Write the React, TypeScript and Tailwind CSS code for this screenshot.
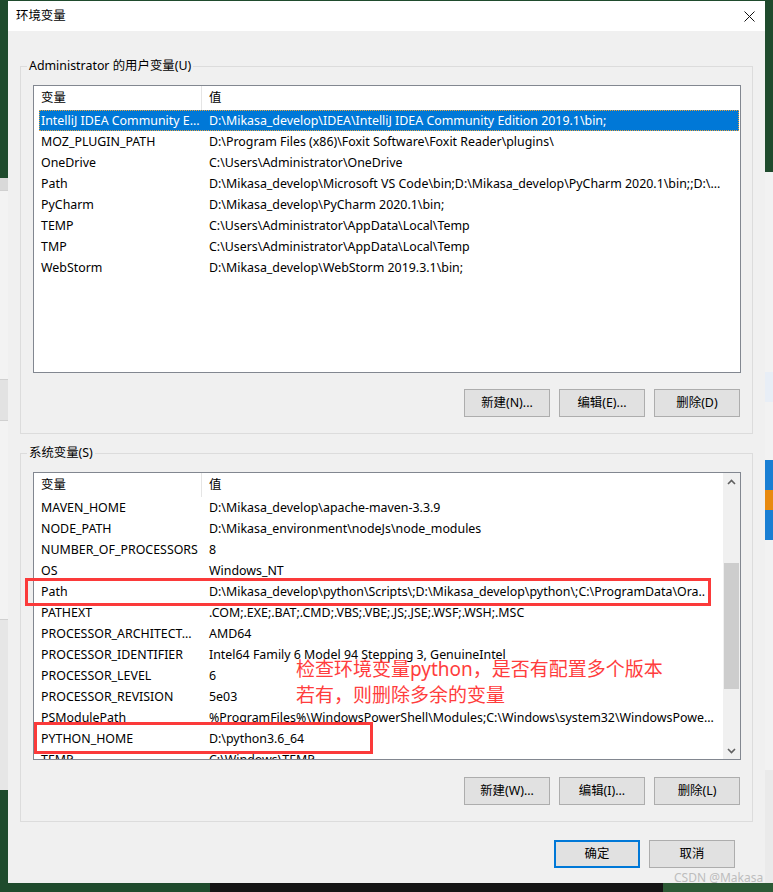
import React from "react";

const font = "font-['Noto_Sans','Noto_Sans_CJK_SC',sans-serif]";

type EnvVar = [string, string];

const userVars: EnvVar[] = [
  ["IntelliJ IDEA Community E...", "D:\\Mikasa_develop\\IDEA\\IntelliJ IDEA Community Edition 2019.1\\bin;"],
  ["MOZ_PLUGIN_PATH", "D:\\Program Files (x86)\\Foxit Software\\Foxit Reader\\plugins\\"],
  ["OneDrive", "C:\\Users\\Administrator\\OneDrive"],
  ["Path", "D:\\Mikasa_develop\\Microsoft VS Code\\bin;D:\\Mikasa_develop\\PyCharm 2020.1\\bin;;D:\\..."],
  ["PyCharm", "D:\\Mikasa_develop\\PyCharm 2020.1\\bin;"],
  ["TEMP", "C:\\Users\\Administrator\\AppData\\Local\\Temp"],
  ["TMP", "C:\\Users\\Administrator\\AppData\\Local\\Temp"],
  ["WebStorm", "D:\\Mikasa_develop\\WebStorm 2019.3.1\\bin;"],
];

const systemVars: EnvVar[] = [
  ["MAVEN_HOME", "D:\\Mikasa_develop\\apache-maven-3.3.9"],
  ["NODE_PATH", "D:\\Mikasa_environment\\nodeJs\\node_modules"],
  ["NUMBER_OF_PROCESSORS", "8"],
  ["OS", "Windows_NT"],
  ["Path", "D:\\Mikasa_develop\\python\\Scripts\\;D:\\Mikasa_develop\\python\\;C:\\ProgramData\\Ora.."],
  ["PATHEXT", ".COM;.EXE;.BAT;.CMD;.VBS;.VBE;.JS;.JSE;.WSF;.WSH;.MSC"],
  ["PROCESSOR_ARCHITECT...", "AMD64"],
  ["PROCESSOR_IDENTIFIER", "Intel64 Family 6 Model 94 Stepping 3, GenuineIntel"],
  ["PROCESSOR_LEVEL", "6"],
  ["PROCESSOR_REVISION", "5e03"],
  ["PSModulePath", "%ProgramFiles%\\WindowsPowerShell\\Modules;C:\\Windows\\system32\\WindowsPowe..."],
  ["PYTHON_HOME", "D:\\python3.6_64"],
  ["TEMP", "C:\\Windows\\TEMP"],
];

function Header() {
  return (
    <div className="flex h-[24px] shrink-0 items-center text-black">
      <div className="flex h-full w-[168px] items-center border-r border-[#e5e5e5] pl-[7px]">变量</div>
      <div className="flex h-full flex-1 items-center pl-[7px]">值</div>
    </div>
  );
}

function Row({ item, selected }: { item: EnvVar; selected?: boolean }) {
  return (
    <div
      className={`ml-[5px] mr-[1px] flex h-[21px] shrink-0 items-center pt-[2px] ${
        selected
          ? "bg-[#0078d7] text-white outline-1 outline-dotted outline-[#e9a23b] -outline-offset-1"
          : "text-black"
      }`}
    >
      <div className="w-[163px] shrink-0 truncate pl-[2px]">{item[0]}</div>
      <div className="min-w-0 flex-1 truncate pl-[7px] pr-[2px]">{item[1]}</div>
    </div>
  );
}

function Chevron({ up }: { up?: boolean }) {
  return (
    <svg width="9" height="6" viewBox="0 0 9 6" className={up ? "" : "rotate-180"}>
      <polyline points="1,5 4.5,1.5 8,5" fill="none" stroke="#606060" strokeWidth="1.6" />
    </svg>
  );
}

function Button({ label, primary }: { label: string; primary?: boolean }) {
  return (
    <button
      className={`flex h-[28px] w-[86px] items-center justify-center bg-[#e1e1e1] text-[12.4px] text-black ${
        primary ? "border-2 border-[#0078d7]" : "border border-[#adadad]"
      }`}
    >
      {label}
    </button>
  );
}

function Group({ title, children }: { title: string; children: React.ReactNode }) {
  return (
    <fieldset className="border border-[#dcdcdc] pb-[16px] pl-[12px] pr-[11px] pt-[11px]">
      <legend className="-ml-[6px] h-[16px] px-[2px] leading-[16px] text-black">{title}</legend>
      {children}
    </fieldset>
  );
}

function LeftStrip() {
  return (
    <div className="flex w-[8px] shrink-0 flex-col">
      <div className="h-[178px] bg-[#1f4b2d]" />
      <div className="h-[12px] bg-[#d9d9d9]" />
      <div className="h-[190px] bg-[#f3f3f3] border-y border-[#d0d0d0]" />
      <div className="h-[40px] bg-[#e2e2e2]" />
      <div className="h-[200px] bg-[#f3f3f3] border-y border-[#d0d0d0]" />
      <div className="h-[170px] bg-[#e6e6e6]" />
      <div className="flex-1 bg-[#1f4b2d]" />
    </div>
  );
}

function RightStrip() {
  return (
    <div className="flex w-[8px] shrink-0 flex-col">
      <div className="h-[172px] bg-[#1f4b2d]" />
      <div className="h-[200px] bg-[#f2f2f2]" />
      <div className="h-[30px] bg-[#e8eef6]" />
      <div className="h-[58px] bg-[#f2f2f2]" />
      <div className="h-[30px] bg-[#1a7fd3]" />
      <div className="h-[20px] bg-[#e88a10]" />
      <div className="h-[30px] bg-[#1a7fd3]" />
      <div className="h-[230px] bg-[#f2f2f2]" />
      <div className="flex-1 bg-[#eaeaea]" />
    </div>
  );
}

export default function App() {
  return (
    <div className={`relative flex h-[892px] w-[773px] flex-col overflow-hidden bg-[#1f4b2d] text-[12.4px] ${font}`}>
      <div className="flex h-[883px] shrink-0">
        <LeftStrip />
        <div className="mt-[1px] flex w-[757px] shrink-0 flex-col">
          {/* title bar */}
          <div className="flex h-[30px] shrink-0 items-center justify-between bg-white pl-[8px] pr-[10px]">
            <span className="text-black">环境变量</span>
            <svg width="11" height="11" viewBox="0 0 11 11">
              <path d="M0.5 0.5 L10.5 10.5 M10.5 0.5 L0.5 10.5" stroke="#111" strokeWidth="1" />
            </svg>
          </div>

          <div className="flex flex-1 flex-col bg-[#f0f0f0] px-[12px] pt-[27px]">
            <Group title="Administrator 的用户变量(U)">
              <div className="flex h-[288px] flex-col overflow-hidden border border-[#828790] bg-white">
                <Header />
                {userVars.map((v, i) => (
                  <Row key={v[0]} item={v} selected={i === 0} />
                ))}
              </div>
              <div className="mt-[16px] flex justify-end gap-[9px] pr-[1px]">
                <Button label="新建(N)..." />
                <Button label="编辑(E)..." />
                <Button label="删除(D)" />
              </div>
            </Group>

            <div className="mt-[11px]">
              <Group title="系统变量(S)">
                <div className="flex h-[288px] overflow-hidden border border-[#828790] bg-white">
                  <div className="flex min-w-0 flex-1 flex-col overflow-hidden">
                    <Header />
                    {systemVars.map((v) => (
                      <Row key={v[0] + v[1]} item={v} />
                    ))}
                  </div>
                  <div className="flex w-[17px] shrink-0 flex-col bg-[#f0f0f0]">
                    <div className="flex h-[17px] items-center justify-center">
                      <Chevron up />
                    </div>
                    <div className="h-[73px]" />
                    <div className="mx-[1px] h-[126px] bg-[#cdcdcd]" />
                    <div className="flex-1" />
                    <div className="flex h-[17px] items-center justify-center">
                      <Chevron />
                    </div>
                  </div>
                </div>
                <div className="mt-[17px] flex justify-end gap-[9px] pr-[1px]">
                  <Button label="新建(W)..." />
                  <Button label="编辑(I)..." />
                  <Button label="删除(L)" />
                </div>
              </Group>
            </div>

            <div className="mt-[18px] flex justify-end gap-[9px] pr-[18px]">
              <Button label="确定" primary />
              <Button label="取消" />
            </div>
          </div>
        </div>
        <RightStrip />
      </div>
      <div className="flex flex-1">
        <div className="w-[210px] bg-[#1f4b2d]" />
        <div className="flex-1 bg-[#151515]" />
        <div className="w-[110px] bg-[#2c5a35]" />
      </div>

      {/* annotations */}
      <div className="absolute left-[25px] top-[578px] h-[28px] w-[686px] border-[3px] border-[#fb3a3a]" />
      <div className="absolute left-[34px] top-[722px] h-[32px] w-[339px] border-[3px] border-[#fb3a3a]" />
      <div className="absolute left-[296px] top-[656px] text-[19px] leading-[26px] text-[#ff3d3d]">
        <div>检查环境变量python，是否有配置多个版本</div>
        <div>若有，则删除多余的变量</div>
      </div>
      <div className="absolute left-[674px] top-[870px] text-[12px] leading-[16px] text-[#bdbdbd]">CSDN @Makasa</div>
    </div>
  );
}
